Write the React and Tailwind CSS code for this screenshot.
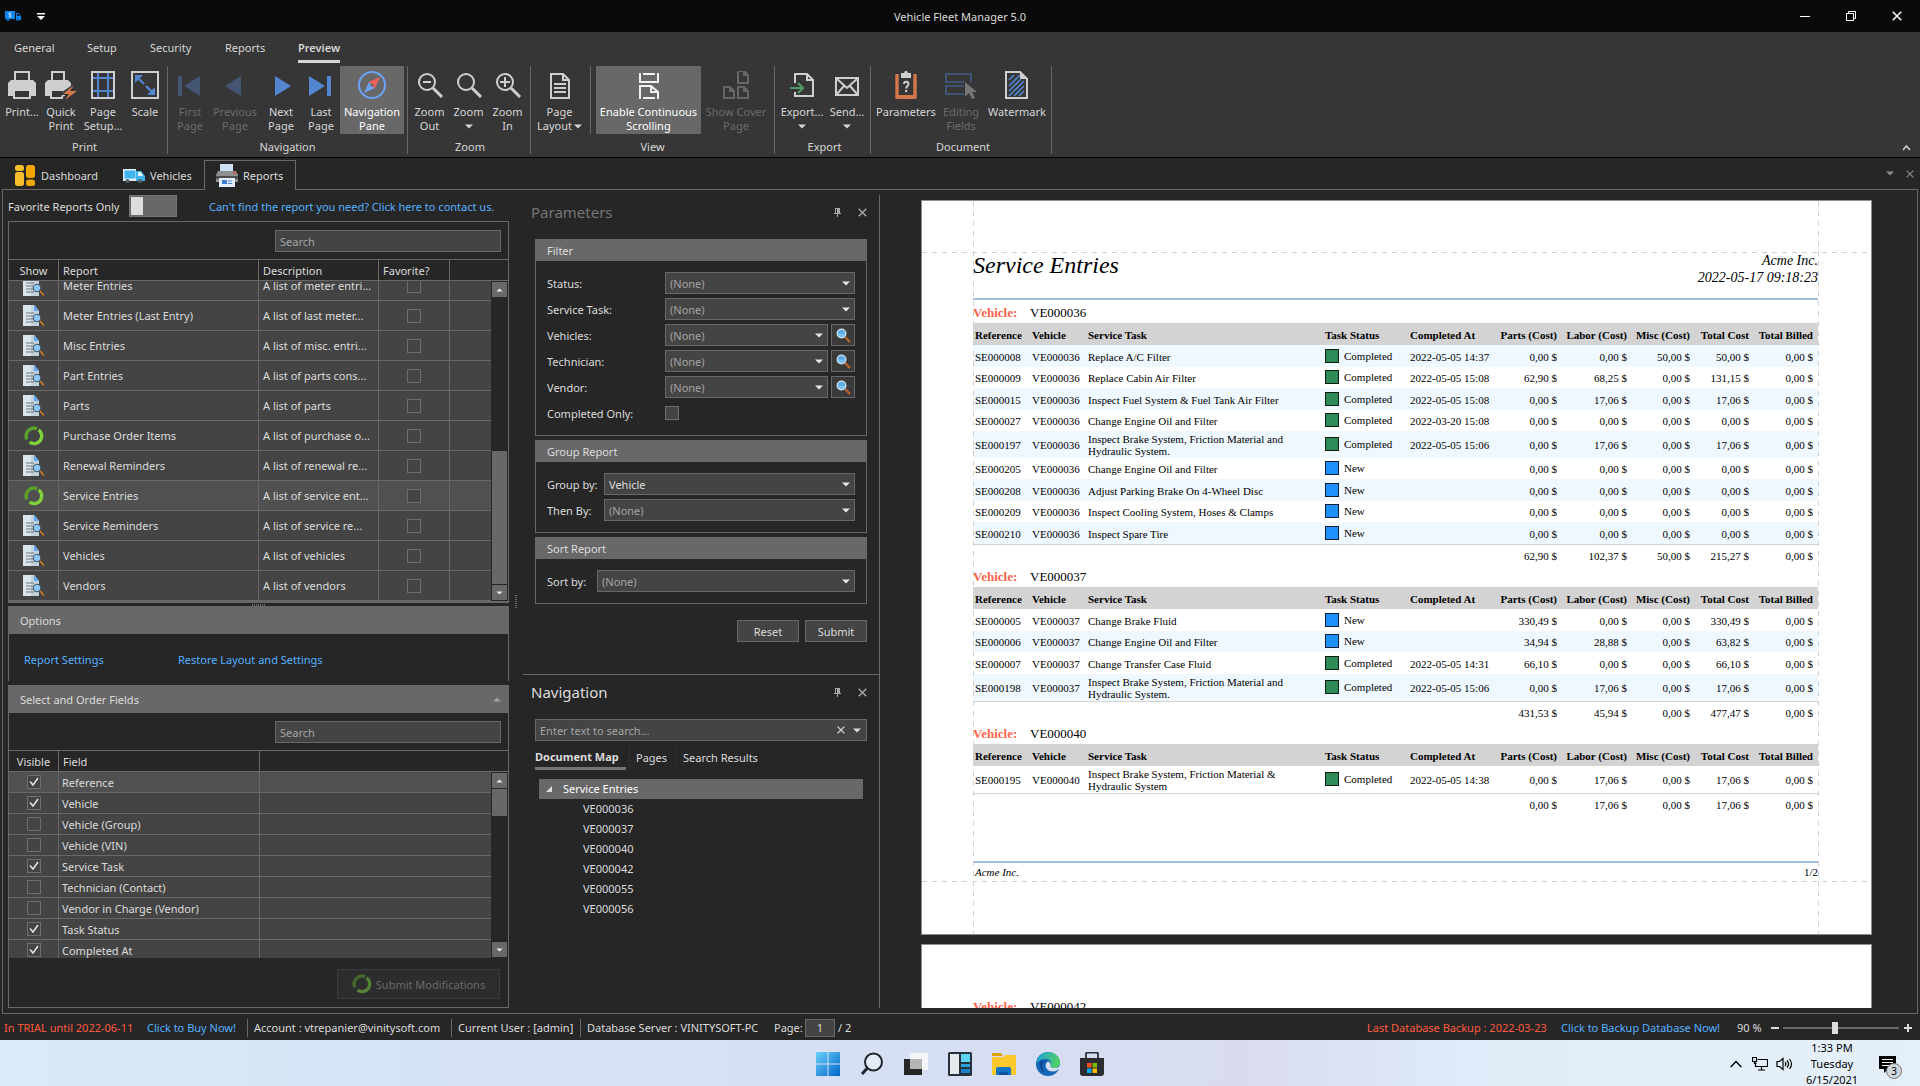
// src/App.jsx
import { useState } from "react";

const REPORTS = [
  { name: "Meter Entries", description: "A list of meter entri..." },
  { name: "Meter Entries (Last Entry)", description: "A list of last meter..." },
  { name: "Misc Entries", description: "A list of misc. entri..." },
  { name: "Part Entries", description: "A list of parts cons..." },
  { name: "Parts", description: "A list of parts" },
  { name: "Purchase Order Items", description: "A list of purchase o...", loading: true },
  { name: "Renewal Reminders", description: "A list of renewal re..." },
  { name: "Service Entries", description: "A list of service ent...", loading: true, selected: true },
  { name: "Service Reminders", description: "A list of service re..." },
  { name: "Vehicles", description: "A list of vehicles" },
  { name: "Vendors", description: "A list of vendors" },
];

const FIELDS = [
  ["Reference", true],
  ["Vehicle", true],
  ["Vehicle (Group)", false],
  ["Vehicle (VIN)", false],
  ["Service Task", true],
  ["Technician (Contact)", false],
  ["Vendor in Charge (Vendor)", false],
  ["Task Status", true],
  ["Completed At", true],
];

const MAP_ENTRIES = ["VE000036", "VE000037", "VE000040", "VE000042", "VE000055", "VE000056"];

// [reference, task, done, completed at, parts, labor, misc, total, billed]
const GROUPS = [
  {
    vehicle: "VE000036",
    shadeFirst: true,
    rows: [
      ["SE000008", "Replace A/C Filter", true, "2022-05-05 14:37", "0,00 $", "0,00 $", "50,00 $", "50,00 $", "0,00 $"],
      ["SE000009", "Replace Cabin Air Filter", true, "2022-05-05 15:08", "62,90 $", "68,25 $", "0,00 $", "131,15 $", "0,00 $"],
      ["SE000015", "Inspect Fuel System & Fuel Tank Air Filter", true, "2022-05-05 15:08", "0,00 $", "17,06 $", "0,00 $", "17,06 $", "0,00 $"],
      ["SE000027", "Change Engine Oil and Filter", true, "2022-03-20 15:08", "0,00 $", "0,00 $", "0,00 $", "0,00 $", "0,00 $"],
      ["SE000197", "Inspect Brake System, Friction Material and Hydraulic System.", true, "2022-05-05 15:06", "0,00 $", "17,06 $", "0,00 $", "17,06 $", "0,00 $"],
      ["SE000205", "Change Engine Oil and Filter", false, "", "0,00 $", "0,00 $", "0,00 $", "0,00 $", "0,00 $"],
      ["SE000208", "Adjust Parking Brake On 4-Wheel Disc", false, "", "0,00 $", "0,00 $", "0,00 $", "0,00 $", "0,00 $"],
      ["SE000209", "Inspect Cooling System, Hoses & Clamps", false, "", "0,00 $", "0,00 $", "0,00 $", "0,00 $", "0,00 $"],
      ["SE000210", "Inspect Spare Tire", false, "", "0,00 $", "0,00 $", "0,00 $", "0,00 $", "0,00 $"],
    ],
    totals: ["62,90 $", "102,37 $", "50,00 $", "215,27 $", "0,00 $"],
  },
  {
    vehicle: "VE000037",
    shadeFirst: false,
    rows: [
      ["SE000005", "Change Brake Fluid", false, "", "330,49 $", "0,00 $", "0,00 $", "330,49 $", "0,00 $"],
      ["SE000006", "Change Engine Oil and Filter", false, "", "34,94 $", "28,88 $", "0,00 $", "63,82 $", "0,00 $"],
      ["SE000007", "Change Transfer Case Fluid", true, "2022-05-05 14:31", "66,10 $", "0,00 $", "0,00 $", "66,10 $", "0,00 $"],
      ["SE000198", "Inspect Brake System, Friction Material and Hydraulic System.", true, "2022-05-05 15:06", "0,00 $", "17,06 $", "0,00 $", "17,06 $", "0,00 $"],
    ],
    totals: ["431,53 $", "45,94 $", "0,00 $", "477,47 $", "0,00 $"],
  },
  {
    vehicle: "VE000040",
    shadeFirst: false,
    rows: [
      ["SE000195", "Inspect Brake System, Friction Material & Hydraulic System", true, "2022-05-05 14:38", "0,00 $", "17,06 $", "0,00 $", "17,06 $", "0,00 $"],
    ],
    totals: ["0,00 $", "17,06 $", "0,00 $", "17,06 $", "0,00 $"],
  },
];

/* ---------- small icons ---------- */

function Caret({ className = "" }) {
  return (
    <svg className={className} width="8" height="5" viewBox="0 0 8 5" fill="currentColor" aria-hidden="true">
      <path d="M0 0.5h8L4 4.5z" />
    </svg>
  );
}

function Cross({ size = 9 }) {
  return (
    <svg width={size} height={size} viewBox="0 0 9 9" stroke="currentColor" strokeWidth="1.4" aria-hidden="true">
      <path d="M0.7 0.7l7.6 7.6M8.3 0.7L0.7 8.3" />
    </svg>
  );
}

function Pin() {
  return (
    <svg width="7" height="9" viewBox="0 0 7 9" fill="currentColor" aria-hidden="true">
      <path d="M1 0h5v5h1v1H4v3H3V6H0V5h1zM2 1v4h1V1z" fillRule="evenodd" />
    </svg>
  );
}

function ReportIcon() {
  return (
    <svg className="mx-auto block" width="21" height="21" viewBox="0 0 21 21" aria-hidden="true">
      <path d="M0 0h11l5 6v15H0z" fill="#d9e6ee" />
      <path d="M8 0h3l5 6v15H8z" fill="#c3d3de" />
      <path d="M11 0l5 6h-5z" fill="#5fa8ef" />
      <path d="M3 8h8M3 11h7M3 14h7M3 17h8" stroke="#777" strokeWidth="1.2" />
      <path d="M17 16l4 4.5" stroke="#d97b1c" strokeWidth="1.6" />
      <circle cx="14" cy="13" r="3.7" fill="#8cc8ff" stroke="#4b5560" strokeWidth="1.1" />
    </svg>
  );
}

function RingIcon({ className = "mx-auto block" }) {
  return (
    <svg className={className} width="20" height="20" viewBox="0 0 20 20" fill="none" strokeWidth="3.4" aria-hidden="true">
      <path d="M13 2.9A7.6 7.6 0 0 0 3.1 13.4" stroke="#5aa02c" />
      <path d="M14.6 3.8A7.6 7.6 0 0 1 5.6 16.2" stroke="#7fd23c" />
    </svg>
  );
}

function LensIcon() {
  return (
    <svg width="15" height="15" viewBox="0 0 15 15" aria-hidden="true">
      <path d="M9 9l5 5" stroke="#b5622c" strokeWidth="2.4" />
      <circle cx="5.5" cy="5.5" r="4.4" fill="#7cc0f0" stroke="#cfe3f0" strokeWidth="1.2" />
      <path d="M2 5.5a3.5 3.5 0 0 1 7 0" fill="#5aa7e4" />
    </svg>
  );
}

/* ---------- ribbon icons, 28 x 28 ---------- */

function RibbonSvg({ children }) {
  return (
    <svg className="block" width="28" height="28" viewBox="0 0 28 28" fill="none" aria-hidden="true">
      {children}
    </svg>
  );
}

const LIGHT = "#cfcfcf";
const BLUE = "#5485cf";

const icons = {
  print: (
    <RibbonSvg>
      <path d="M7 9V1h14v8" stroke={LIGHT} strokeWidth="2" />
      <path d="M3 9h22l3 3v13H0V12z" fill={LIGHT} />
      <path d="M6 19h16v8H6z" fill="#363636" stroke={LIGHT} strokeWidth="2" />
      <path d="M0 25h5v3H0zM23 25h5v3h-5z" fill="#363636" />
    </RibbonSvg>
  ),
  quick: (
    <svg className="block" width="32" height="28" viewBox="0 0 32 28" fill="none" aria-hidden="true">
      <path d="M7 9V1h12v8" stroke={LIGHT} strokeWidth="2" />
      <path d="M3 9h20l3 3v4l-6 9H0V12z" fill={LIGHT} />
      <path d="M6 19h13l-2 8H6z" fill="#363636" stroke={LIGHT} strokeWidth="2" />
      <path d="M29 14l-13 9h6l-4 7 14-10h-7z" fill="#363636" stroke="#363636" strokeWidth="2" />
      <path d="M29 14L18 23h6l-4 6 12-9h-7z" fill="#d2784a" />
    </svg>
  ),
  setup: (
    <RibbonSvg>
      <path d="M3 1h22v26H3z" stroke={LIGHT} strokeWidth="2" />
      <path d="M9 2v24M19 2v24M4 7h20M4 20h20" stroke={BLUE} strokeWidth="2" />
    </RibbonSvg>
  ),
  scale: (
    <RibbonSvg>
      <path d="M1 1h26v26H1z" stroke={LIGHT} strokeWidth="2" />
      <path d="M8 8l5 5M15 15l6 6" stroke={BLUE} strokeWidth="2.4" />
      <path d="M4 4h8l-8 8zM24 24h-8l8-8z" fill={BLUE} />
    </RibbonSvg>
  ),
  first: (
    <RibbonSvg>
      <path d="M2 5h4v20H2zM24 5v20L8 15z" fill="#445573" />
    </RibbonSvg>
  ),
  prev: (
    <RibbonSvg>
      <path d="M20 5v20L4 15z" fill="#445573" />
    </RibbonSvg>
  ),
  next: (
    <RibbonSvg>
      <path d="M8 5v20l16-10z" fill={BLUE} />
    </RibbonSvg>
  ),
  last: (
    <RibbonSvg>
      <path d="M2 5v20l16-10zM20 5h4v20h-4z" fill={BLUE} />
    </RibbonSvg>
  ),
  compass: (
    <RibbonSvg>
      <circle cx="14" cy="14" r="13" stroke="#6ea2f2" strokeWidth="2" />
      <path d="M6 22l5-11 6 6z" fill="#6ea2f2" />
      <path d="M22 6L11 11l3 3-1 1 2 1 2 1z" fill="#f56262" />
      <circle cx="14" cy="14" r="1.6" fill="#686868" />
    </RibbonSvg>
  ),
  zoomOut: (
    <RibbonSvg>
      <circle cx="11" cy="11" r="8" stroke={LIGHT} strokeWidth="2" />
      <path d="M17 17l9 9" stroke={LIGHT} strokeWidth="3" />
      <path d="M7 11h8" stroke={LIGHT} strokeWidth="2" />
    </RibbonSvg>
  ),
  zoom: (
    <RibbonSvg>
      <circle cx="11" cy="11" r="8" stroke={LIGHT} strokeWidth="2" />
      <path d="M17 17l9 9" stroke={LIGHT} strokeWidth="3" />
    </RibbonSvg>
  ),
  zoomIn: (
    <RibbonSvg>
      <circle cx="11" cy="11" r="8" stroke={LIGHT} strokeWidth="2" />
      <path d="M17 17l9 9" stroke={LIGHT} strokeWidth="3" />
      <path d="M6 11h10M11 6v10" stroke={LIGHT} strokeWidth="2" />
    </RibbonSvg>
  ),
  layout: (
    <RibbonSvg>
      <path d="M5 3h12l6 6v18H5z" stroke={LIGHT} strokeWidth="2" />
      <path d="M17 3v6h6" stroke={LIGHT} strokeWidth="2" />
      <path d="M8 13h12M8 17h12M8 21h12" stroke={LIGHT} strokeWidth="2" />
    </RibbonSvg>
  ),
  scrolling: (
    <RibbonSvg>
      <path d="M5 2v9h18V2M8 3h12" stroke="#f2f2f2" strokeWidth="2" />
      <path d="M5 28V15h11l7 6v7M16 15v6h7M8 27h12" stroke="#f2f2f2" strokeWidth="2" />
    </RibbonSvg>
  ),
  cover: (
    <RibbonSvg>
      <path d="M16 0h6l4 4v8H16zM22 0v4h4" stroke="#666" strokeWidth="2" />
      <path d="M2 16h6l4 4v7H2zM8 16v4h4M16 16h6l4 4v7H16zM22 16v4h4" stroke="#666" strokeWidth="2" />
    </RibbonSvg>
  ),
  exportDoc: (
    <RibbonSvg>
      <path d="M7 12V3h12l6 6v16H7v-4M19 3v6h6" stroke={LIGHT} strokeWidth="2" />
      <path d="M2 17h12M10 12l5 5-5 5" stroke="#4f9a68" strokeWidth="2.2" />
    </RibbonSvg>
  ),
  send: (
    <RibbonSvg>
      <path d="M3 7h22v17H3z" stroke={LIGHT} strokeWidth="2" />
      <path d="M3 7l11 10L25 7M3 24l8-9M25 24l-8-9" stroke={LIGHT} strokeWidth="2" />
    </RibbonSvg>
  ),
  params: (
    <RibbonSvg>
      <path d="M5 3v23h18V3" stroke="#d2784a" strokeWidth="3.4" />
      <path d="M5 26h18" stroke="#d2784a" strokeWidth="4" />
      <path d="M9 2h3l1-2h2l1 2h3v5H9z" fill={LIGHT} />
      <path d="M12 13c0-3 4.5-3 4.5 0 0 2-2.3 2-2.3 4.500" stroke={LIGHT} strokeWidth="1.9" />
      <circle cx="14.2" cy="20" r="1.2" fill={LIGHT} />
    </RibbonSvg>
  ),
  editing: (
    <svg className="block" width="32" height="28" viewBox="0 0 32 28" fill="none" aria-hidden="true">
      <path d="M26 11V3H1v8h18M19 15H1v8h18" stroke="#3f5377" strokeWidth="2" />
      <path d="M20 11v15l4-4 3 6 3-1-3-6h5z" fill="#777" />
    </svg>
  ),
  watermark: (
    <RibbonSvg>
      <path d="M3 1h14l7 7v19H3z" stroke={LIGHT} strokeWidth="2" />
      <path d="M17 0v8h8z" fill={LIGHT} />
      <path d="M6 9l5-5M6 15L17 4M6 20L18 8M6 25l15-15M11 25l10-10M16 25l5-5" stroke={BLUE} strokeWidth="1.6" />
    </RibbonSvg>
  ),
};

/* ---------- ribbon ---------- */

function RibbonButton({ icon, lines, width, disabled, active, caret, inlineCaret }) {
  const tone = disabled ? "text-[#6b6b6b]" : active ? "bg-[#686868] text-white" : "text-[#d6d6d6]";
  return (
    <button
      type="button"
      disabled={disabled}
      aria-pressed={active}
      className={`${width} ${tone} h-[68px] shrink-0 flex flex-col items-center pt-[5px] text-[11px] leading-[14px] whitespace-nowrap`}
    >
      {icons[icon]}
      <span className="mt-[6px] block">{lines[0]}</span>
      {lines[1] && (
        <span className="flex items-center justify-center gap-[2px]">
          {lines[1]}
          {inlineCaret && <Caret />}
        </span>
      )}
      {caret && <Caret className="mt-[5px]" />}
    </button>
  );
}

function RibbonGroup({ label, width, children }) {
  return (
    <div className={`${width} shrink-0 flex flex-col border-r border-[#686868]`}>
      <div className="flex items-start">{children}</div>
      <div className="mt-[5px] text-center text-[11px] leading-[15px] text-[#d6d6d6]">{label}</div>
    </div>
  );
}

function Ribbon() {
  return (
    <div className="bg-[#363636] border-b border-black">
      <nav className="flex h-[34px] pl-[14px] text-[11px] text-[#d6d6d6] [&>button]:h-[31px] [&>button]:text-left">
        <button type="button" className="w-[73px]">General</button>
        <button type="button" className="w-[63px]">Setup</button>
        <button type="button" className="w-[75px]">Security</button>
        <button type="button" className="w-[73px]">Reports</button>
        <button type="button" className="font-semibold shadow-[inset_0_-3px_#d6d6d6]">Preview</button>
      </nav>
      <div className="flex h-[91px] pb-[3px]">
        <RibbonGroup label="Print" width="w-[168px] pl-[2px]">
          <RibbonButton icon="print" lines={["Print..."]} width="w-[40px]" />
          <RibbonButton icon="quick" lines={["Quick", "Print"]} width="w-[38px]" />
          <RibbonButton icon="setup" lines={["Page", "Setup..."]} width="w-[46px]" />
          <RibbonButton icon="scale" lines={["Scale"]} width="w-[38px]" />
        </RibbonGroup>
        <RibbonGroup label="Navigation" width="w-[240px]">
          <RibbonButton icon="first" lines={["First", "Page"]} width="w-[44px]" disabled />
          <RibbonButton icon="prev" lines={["Previous", "Page"]} width="w-[46px]" disabled />
          <RibbonButton icon="next" lines={["Next", "Page"]} width="w-[46px]" />
          <div className="w-9 flex">
            <RibbonButton icon="last" lines={["Last", "Page"]} width="w-[34px]" />
          </div>
          <RibbonButton icon="compass" lines={["Navigation", "Pane"]} width="w-[64px]" active />
        </RibbonGroup>
        <RibbonGroup label="Zoom" width="w-[123px] pl-[2px]">
          <RibbonButton icon="zoomOut" lines={["Zoom", "Out"]} width="w-[39px]" />
          <RibbonButton icon="zoom" lines={["Zoom"]} width="w-[39px]" caret />
          <RibbonButton icon="zoomIn" lines={["Zoom", "In"]} width="w-[39px]" />
        </RibbonGroup>
        <RibbonGroup label="View" width="w-[244px]">
          <div className="w-[60px] shrink-0 flex pl-[3px] border-r border-[#686868] mr-[5px]">
            <RibbonButton icon="layout" lines={["Page", "Layout"]} width="w-[51px]" inlineCaret />
          </div>
          <RibbonButton icon="scrolling" lines={["Enable Continuous", "Scrolling"]} width="w-[105px]" active />
          <RibbonButton icon="cover" lines={["Show Cover", "Page"]} width="w-[70px]" disabled />
        </RibbonGroup>
        <RibbonGroup label="Export" width="w-[96px] pl-[4px]">
          <RibbonButton icon="exportDoc" lines={["Export..."]} width="w-[46px]" caret />
          <RibbonButton icon="send" lines={["Send..."]} width="w-[44px]" caret />
        </RibbonGroup>
        <RibbonGroup label="Document" width="w-[181px] pl-[4px]">
          <RibbonButton icon="params" lines={["Parameters"]} width="w-[62px]" />
          <RibbonButton icon="editing" lines={["Editing", "Fields"]} width="w-[48px]" disabled />
          <RibbonButton icon="watermark" lines={["Watermark"]} width="w-[64px]" />
        </RibbonGroup>
        <button type="button" aria-label="Collapse ribbon" className="ml-auto self-end mr-[9px] mb-[3px] text-[#d6d6d6]">
          <svg width="9" height="6" viewBox="0 0 9 6" fill="none" stroke="currentColor" strokeWidth="1.5">
            <path d="M1 5l3.500-4L8 5" />
          </svg>
        </button>
      </div>
    </div>
  );
}

function TitleBar() {
  return (
    <header className="grid grid-cols-3 items-center h-8 bg-[#0a0a0a] text-[#dcdcdc] text-[11px]">
      <div className="flex items-center gap-4 pl-[5px]">
        <svg width="16" height="10" viewBox="0 0 16 10" aria-hidden="true">
          <path d="M0 0h10v8H0z" fill="#0a86f0" />
          <path d="M11 2h3l2 3v4h-5z" fill="#0a86f0" />
          <path d="M12 3h2l1 2h-3z" fill="#0a0a0a" />
          <path d="M6.5 2H4v2h2v2H3.5" stroke="#bfe2ff" fill="none" />
          <circle cx="3" cy="8.5" r="1.5" fill="#0a6ac0" />
          <circle cx="12.5" cy="8.5" r="1.5" fill="#0a6ac0" />
        </svg>
        <svg width="8" height="7" viewBox="0 0 8 7" fill="#fff" aria-hidden="true">
          <path d="M0 0h8v1.500H0zM0 3h8L4 7z" />
        </svg>
      </div>
      <h1 className="text-center">Vehicle Fleet Manager 5.0</h1>
      <div className="flex justify-end items-center gap-9 pr-[18px]">
        <button type="button" aria-label="Minimize" className="w-[10px] h-[10px] flex items-center">
          <span className="h-px w-full bg-white" />
        </button>
        <button type="button" aria-label="Restore">
          <svg width="10" height="10" viewBox="0 0 10 10" fill="none" stroke="#fff">
            <path d="M0.5 2.500h7v7h-7zM2.500 2.500v-2h7v7h-2" />
          </svg>
        </button>
        <button type="button" aria-label="Close" className="text-white">
          <Cross size={10} />
        </button>
      </div>
    </header>
  );
}

/* ---------- document tabs ---------- */

function DocumentTabs() {
  return (
    <div className="flex items-end h-[31px] px-[2px] text-[11px] text-[#dcdcdc]">
      <button type="button" className="flex items-center gap-[5px] h-[28px] pl-[13px] w-[103px]">
        <svg width="21" height="21" viewBox="0 0 21 21" aria-hidden="true">
          <rect x="0" y="0" width="9" height="6" rx="2.5" fill="#f6bd2c" />
          <rect x="0" y="7" width="9" height="14" rx="2.5" fill="#f6bd2c" />
          <rect x="11" y="0" width="9" height="13" rx="2.5" fill="#f2a600" />
          <rect x="11" y="14.5" width="9" height="6.5" rx="2.5" fill="#f2a600" />
        </svg>
        Dashboard
      </button>
      <button type="button" className="flex items-center gap-[5px] h-[28px] pl-[18px] w-[99px]">
        <svg width="22" height="15" viewBox="0 0 22 15" aria-hidden="true">
          <path d="M0 1h13v12H0z" fill="#dfeef5" />
          <path d="M1.5 2.500h11v8h-11z" fill="#3fb4ee" />
          <path d="M13 3h5l4 5v5h-9z" fill="#3fb4ee" />
          <path d="M15 4h3l2 4h-5z" fill="#e8f6ff" />
          <circle cx="4.5" cy="13" r="2" fill="#56636b" />
          <circle cx="17" cy="13" r="2" fill="#56636b" />
        </svg>
        Vehicles
      </button>
      <button
        type="button"
        className="flex items-center gap-[5px] h-[30px] -mb-px pl-[11px] w-[92px] border border-b-0 border-[#686868] bg-[#262626] relative z-10"
      >
        <svg width="22" height="23" viewBox="0 0 22 23" aria-hidden="true">
          <path d="M4 0h13v9H4z" fill="#cfe0f4" />
          <path d="M2 7h18l2 4v7H0v-7z" fill="#8f8f8f" />
          <path d="M0 12h22v3H0z" fill="#4d4d4d" />
          <circle cx="18.5" cy="9" r="1.2" fill="#e04040" />
          <path d="M3 14h16v9H3z" fill="#e4eefb" />
          <path d="M6 16h5v4H6z" fill="#3c7dd9" />
          <path d="M12 17h4M12 19.500h4" stroke="#3c7dd9" />
        </svg>
        Reports
      </button>
      <div className="ml-auto self-center flex items-center gap-3 pr-1 text-[#8a8a8a]">
        <button type="button" aria-label="Open tabs"><Caret /></button>
        <button type="button" aria-label="Close tab"><Cross size={8} /></button>
      </div>
    </div>
  );
}

/* ---------- left column ---------- */

function GridCheckbox({ label, checked, onChange }) {
  return (
    <span className="relative mx-auto block w-[14px] h-[14px]">
      <input
        type="checkbox"
        aria-label={label}
        checked={checked}
        onChange={onChange}
        className="block appearance-none w-[14px] h-[14px] border border-[#6e6e6e] bg-[#444]"
      />
      {checked && (
        <svg className="absolute inset-0 pointer-events-none" width="14" height="14" viewBox="0 0 14 14" fill="none">
          <path d="M3 6.500l3 3.500 5-7" stroke="#e4e4e4" strokeWidth="1.5" />
        </svg>
      )}
    </span>
  );
}

function ScrollTrack({ children }) {
  return (
    <div className="w-[17px] shrink-0 flex flex-col px-px py-[1px] bg-[#262626]" aria-hidden="true">
      <div className="h-[15px] bg-[#686868] flex items-center justify-center text-[#e6e6e6]">
        <Caret className="rotate-180 w-[7px] h-[4px]" />
      </div>
      <div className="flex-1 flex flex-col py-px">{children}</div>
      <div className="h-[15px] bg-[#686868] flex items-center justify-center text-[#e6e6e6]">
        <Caret className="w-[7px] h-[4px]" />
      </div>
    </div>
  );
}

function SearchBox({ label }) {
  return (
    <input
      type="search"
      aria-label={label}
      placeholder="Search"
      className="w-[226px] h-[22px] px-1 border border-[#686868] bg-[#444] text-[11px] text-[#dcdcdc] placeholder:text-[#a5a5a5]"
    />
  );
}

function ReportCols() {
  return (
    <colgroup>
      <col className="w-[50px]" />
      <col className="w-[200px]" />
      <col className="w-[120px]" />
      <col className="w-[71px]" />
      <col />
    </colgroup>
  );
}

function ReportList() {
  const [favorites, setFavorites] = useState([]);
  const toggle = (name) =>
    setFavorites((f) => (f.includes(name) ? f.filter((n) => n !== name) : [...f, name]));

  return (
    <section className="flex flex-col h-[382px] shrink-0 mt-1 border border-b-2 border-[#686868]">
      <div className="flex justify-end pt-2 pr-[7px] h-[37px]">
        <SearchBox label="Search reports" />
      </div>
      <table className="w-full table-fixed border-separate border-spacing-0">
        <ReportCols />
        <thead>
          <tr className="text-left [&>th]:border-y [&>th]:border-r [&>th]:border-[#686868] [&>th]:font-normal [&>th]:h-[22px]">
            <th className="text-center">Show</th>
            <th className="pl-1">Report</th>
            <th className="pl-1">Description</th>
            <th className="pl-1">Favorite?</th>
            <th className="border-r-0!" aria-label="Empty column" />
          </tr>
        </thead>
      </table>
      {/* scrolled to the end, so the first row is cut at its top */}
      <div className="flex flex-1 min-h-0">
        <div className="flex-1 min-w-0 flex flex-col justify-end overflow-hidden">
          <table className="w-full table-fixed border-separate border-spacing-0 shrink-0">
            <ReportCols />
            <tbody>
              {REPORTS.map((r) => (
                <tr
                  key={r.name}
                  className={`${r.selected ? "bg-[#505050]" : "bg-[#444]"} [&>td]:h-[30px] [&>td]:border-b [&>td]:border-r [&>td]:border-[#686868]`}
                >
                  <td>{r.loading ? <RingIcon /> : <ReportIcon />}</td>
                  <td className="pl-1">{r.name}</td>
                  <td className="pl-1 whitespace-nowrap">{r.description}</td>
                  <td>
                    <GridCheckbox
                      label={`Favorite ${r.name}`}
                      checked={favorites.includes(r.name)}
                      onChange={() => toggle(r.name)}
                    />
                  </td>
                  <td className="border-r-0!" />
                </tr>
              ))}
            </tbody>
          </table>
        </div>
        <ScrollTrack>
          <div className="mt-auto h-[133px] bg-[#686868]" />
        </ScrollTrack>
      </div>
    </section>
  );
}

function FieldCols() {
  return (
    <colgroup>
      <col className="w-[50px]" />
      <col className="w-[201px]" />
      <col />
    </colgroup>
  );
}

function FieldList() {
  const [fields, setFields] = useState(FIELDS);
  const toggle = (name) => setFields((l) => l.map(([n, on]) => [n, n === name ? !on : on]));

  return (
    <section className="flex flex-col flex-1 min-h-0 mt-1 border border-t-0 border-[#686868]">
      <h2 className="flex items-center justify-between h-7 shrink-0 px-[11px] bg-[#686868]">
        Select and Order Fields
        <Caret className="rotate-180 text-[#a0a0a0] -mr-[4px]" />
      </h2>
      <div className="flex justify-end pt-2 pr-[7px] h-[37px] shrink-0">
        <SearchBox label="Search fields" />
      </div>
      <table className="w-full table-fixed border-separate border-spacing-0">
        <FieldCols />
        <thead>
          <tr className="text-left [&>th]:border-y [&>th]:border-r [&>th]:border-[#686868] [&>th]:font-normal [&>th]:h-[22px]">
            <th className="text-center">Visible</th>
            <th className="pl-1">Field</th>
            <th className="border-r-0!" aria-label="Empty column" />
          </tr>
        </thead>
      </table>
      <div className="flex flex-1 min-h-0">
        <div className="flex-1 overflow-hidden">
          <table className="w-full table-fixed border-separate border-spacing-0">
            <FieldCols />
            <tbody>
              {fields.map(([name, on], i) => (
                <tr
                  key={name}
                  className={`${i === 0 ? "bg-[#505050]" : "bg-[#444]"} [&>td]:h-[21px] [&>td]:border-b [&>td]:border-r [&>td]:border-[#686868]`}
                >
                  <td><GridCheckbox label={`Show ${name}`} checked={on} onChange={() => toggle(name)} /></td>
                  <td className="pl-[3px] pt-px leading-[16px]">{name}</td>
                  <td className="border-r-0!" />
                </tr>
              ))}
            </tbody>
          </table>
        </div>
        <ScrollTrack>
          <div className="h-[27px] bg-[#686868]" />
        </ScrollTrack>
      </div>
      <div className="flex justify-end shrink-0 pt-[11px] pb-2 pr-2">
        <button type="button" disabled className="flex items-center justify-center gap-1 w-[163px] h-[30px] border border-[#3c3c3c] bg-[#2d2d2d] text-[#6b6b6b]">
          <RingIcon className="opacity-50" />
          Submit Modifications
        </button>
      </div>
    </section>
  );
}

function ReportsColumn() {
  return (
    <div className="w-[501px] shrink-0 flex flex-col py-[5px]">
      <div className="flex items-center h-[22px] shrink-0">
        <label htmlFor="favorites-only" className="w-[121px]">Favorite Reports Only</label>
        <span className="relative block w-[48px] h-[22px]">
          <input
            id="favorites-only"
            type="checkbox"
            role="switch"
            className="peer block appearance-none w-[48px] h-[22px] border border-[#757575] bg-[#686868]"
          />
          <span className="absolute left-[2px] top-[2px] w-3 h-[18px] bg-[#dcdcdc] pointer-events-none peer-checked:left-[34px]" />
        </span>
        <a href="#contact" className="ml-auto w-[300px] text-[#55b1ff] whitespace-nowrap">
          Can't find the report you need? Click here to contact us.
        </a>
      </div>
      <ReportList />
      <div className="h-[3px] shrink-0 flex justify-center items-center">
        <span className="w-[13px] h-[2px] bg-[repeating-linear-gradient(90deg,#686868_0_1px,transparent_1px_2px)]" />
      </div>
      <section className="shrink-0 border-x border-[#686868]">
        <h2 className="flex items-center h-7 px-[11px] bg-[#686868]">Options</h2>
        <div className="flex items-center h-[47px] px-[15px] pt-[3px]">
          <a href="#settings" className="w-[154px] text-[#55b1ff]">Report Settings</a>
          <a href="#restore" className="text-[#55b1ff]">Restore Layout and Settings</a>
        </div>
      </section>
      <FieldList />
    </div>
  );
}

/* ---------- parameters and navigation ---------- */

function PaneTitle({ title, tone }) {
  return (
    <div className="flex items-center justify-between h-[34px] mb-[10px] shrink-0 pl-2 pr-3 text-[#a8a8a8]">
      <h2 className={`text-[15px] leading-5 ${tone}`}>{title}</h2>
      <div className="flex items-center gap-[17px]">
        <button type="button" aria-label={`Pin ${title}`}><Pin /></button>
        <button type="button" aria-label={`Close ${title}`}><Cross /></button>
      </div>
    </div>
  );
}

function Picker({ id, label, labelWidth, value = "(None)", lookup }) {
  return (
    <div className="flex items-center h-[22px]">
      <label htmlFor={id} className={`${labelWidth} shrink-0`}>{label}</label>
      <span className="relative flex-1">
        <select
          id={id}
          defaultValue={value}
          className={`block appearance-none w-full h-[22px] px-1 border border-[#686868] bg-[#444] ${value === "(None)" ? "text-[#a5a5a5]" : "text-[#dcdcdc]"}`}
        >
          <option>{value}</option>
        </select>
        <Caret className="absolute right-[5px] top-[9px] pointer-events-none text-[#e6e6e6]" />
      </span>
      {lookup && (
        <button
          type="button"
          aria-label={`Find ${label}`}
          className="ml-[3px] w-6 h-[22px] border border-[#686868] bg-[#3a3a3a] flex items-center justify-center"
        >
          <LensIcon />
        </button>
      )}
    </div>
  );
}

function ParamGroup({ title, children }) {
  return (
    <section aria-label={title} className="border border-t-0 border-[#686868]">
      <h3 className="flex items-center h-[22px] px-[11px] bg-[#686868]">{title}</h3>
      <div className="flex flex-col gap-1 px-[11px] py-[11px]">{children}</div>
    </section>
  );
}

function SidePanes() {
  return (
    <aside className="w-[357px] shrink-0 my-[5px] flex flex-col border-r border-[#686868]">
      <PaneTitle title="Parameters" tone="text-[#757575]" />
      <form className="flex flex-col gap-1 px-3" onSubmit={(e) => e.preventDefault()}>
        <ParamGroup title="Filter">
          <Picker id="status" label="Status:" labelWidth="w-[118px]" />
          <Picker id="task" label="Service Task:" labelWidth="w-[118px]" />
          <Picker id="vehicles" label="Vehicles:" labelWidth="w-[118px]" lookup />
          <Picker id="technician" label="Technician:" labelWidth="w-[118px]" lookup />
          <Picker id="vendor" label="Vendor:" labelWidth="w-[118px]" lookup />
          <div className="flex items-center h-[22px]">
            <label htmlFor="completed-only" className="w-[118px]">Completed Only:</label>
            <input id="completed-only" type="checkbox" className="appearance-none w-[14px] h-[14px] border border-[#6e6e6e] bg-[#444] checked:bg-[#9a9a9a]" />
          </div>
        </ParamGroup>
        <ParamGroup title="Group Report">
          <Picker id="group-by" label="Group by:" labelWidth="w-[57px]" value="Vehicle" />
          <Picker id="then-by" label="Then By:" labelWidth="w-[57px]" />
        </ParamGroup>
        <ParamGroup title="Sort Report">
          <Picker id="sort-by" label="Sort by:" labelWidth="w-[50px]" />
        </ParamGroup>
        <div className="flex justify-end gap-[6px] mt-3">
          <button type="reset" className="w-[62px] h-[22px] border border-[#686868] bg-[#444]">Reset</button>
          <button type="submit" className="w-[62px] h-[22px] border border-[#686868] bg-[#444]">Submit</button>
        </div>
      </form>

      <div className="mt-8 border-t border-[#686868]">
        <PaneTitle title="Navigation" tone="text-[#dcdcdc]" />
        <div className="px-3">
          <div className="flex items-center gap-2 h-[22px] pr-[5px] border border-[#686868] bg-[#444]">
            <input
              type="text"
              aria-label="Search in document"
              placeholder="Enter text to search..."
              className="flex-1 h-[20px] px-1 text-[11px] placeholder:text-[#a5a5a5]"
            />
            <button type="button" aria-label="Clear search"><Cross size={8} /></button>
            <button type="button" aria-label="Search options"><Caret /></button>
          </div>
          <div className="flex mt-1 h-[25px] leading-[24px]">
            <button type="button" className="w-[91px] text-left font-bold border-b-[3px] border-[#757575] whitespace-nowrap">
              Document Map
            </button>
            <button type="button" className="w-[48px] ml-[3px] pl-[6px] text-left border-x border-[#303030]">Pages</button>
            <button type="button" className="ml-[6px] whitespace-nowrap">Search Results</button>
          </div>
          <ul className="mt-[9px] px-1 leading-5">
            <li>
              <button type="button" className="flex items-center gap-[11px] w-full h-5 pl-[7px] bg-[#686868] text-white">
                <svg width="6" height="6" viewBox="0 0 6 6" fill="#dcdcdc" aria-hidden="true">
                  <path d="M6 0v6H0z" />
                </svg>
                Service Entries
              </button>
              <ul>
                {MAP_ENTRIES.map((v) => (
                  <li key={v}>
                    <button type="button" className="block w-full h-5 pl-[44px] text-left">{v}</button>
                  </li>
                ))}
              </ul>
            </li>
          </ul>
        </div>
      </div>
    </aside>
  );
}

/* ---------- printed report ---------- */

function Status({ done }) {
  return (
    <span className="flex items-center gap-[5px] leading-[14px] pb-[2px]">
      <span className={`${done ? "bg-[#2e8b57]" : "bg-[#1e90ff]"} w-[14px] h-[14px] border border-black/80`} />
      {done ? "Completed" : "New"}
    </span>
  );
}

function VehicleHeading({ vehicle }) {
  return (
    <h3 className="flex h-[21px] items-center text-[13px]">
      <span className="w-[57px] font-bold text-[#ff6347]">Vehicle:</span>
      <span>{vehicle}</span>
    </h3>
  );
}

function VehicleGroup({ group }) {
  return (
    <section>
      <VehicleHeading vehicle={group.vehicle} />
      <table className="w-full table-fixed border-separate border-spacing-0 text-[11px] leading-[12px]">
        <colgroup>
          <col className="w-[57px]" />
          <col className="w-[56px]" />
          <col />
          <col className="w-[84px]" />
          <col className="w-[89px]" />
          <col className="w-[66px]" />
          <col className="w-[70px]" />
          <col className="w-[63px]" />
          <col className="w-[59px]" />
          <col className="w-[64px]" />
        </colgroup>
        <thead>
          <tr className="bg-[#d3d3d3] text-left whitespace-nowrap [&>th]:h-[22px] [&>th]:px-[2px] [&>th]:pt-px">
            <th>Reference</th>
            <th>Vehicle</th>
            <th>Service Task</th>
            <th>Task Status</th>
            <th className="pl-[3px]!">Completed At</th>
            {["Parts (Cost)", "Labor (Cost)", "Misc (Cost)", "Total Cost", "Total Billed"].map((h) => (
              <th key={h} className="text-right pr-[5px]!">{h}</th>
            ))}
          </tr>
        </thead>
        <tbody>
          {group.rows.map(([ref, task, done, completedAt, ...costs], i) => {
            const shaded = (i % 2 === 0) === group.shadeFirst;
            const tall = task.length > 50;
            const height = tall ? "[&>td]:h-[27px]" : i % 2 === 0 ? "[&>td]:h-[22px]" : "[&>td]:h-[21px]";
            return (
              <tr key={ref} className={`${shaded ? "bg-[#f0f8ff]" : ""} ${height} [&>td]:px-[2px] [&>td]:pt-px [&>td]:pb-0`}>
                <td>{ref}</td>
                <td>{group.vehicle}</td>
                <td className="pr-8!">{task}</td>
                <td><Status done={done} /></td>
                <td className="pl-[3px]! whitespace-nowrap">{completedAt}</td>
                {costs.map((c, n) => (
                  <td key={n} className="text-right pr-[5px]!">{c}</td>
                ))}
              </tr>
            );
          })}
        </tbody>
        <tfoot>
          <tr className="[&>td]:h-[22px] [&>td]:border-t [&>td]:border-[#d3d3d3]">
            <td colSpan={5} />
            {group.totals.map((c, n) => (
              <td key={n} className="text-right pr-[5px]">{c}</td>
            ))}
          </tr>
        </tfoot>
      </table>
    </section>
  );
}

function MarginGuides() {
  return (
    <div aria-hidden="true" className="absolute inset-0 pointer-events-none">
      <div className="absolute inset-y-0 left-[51px] w-px bg-[repeating-linear-gradient(180deg,#d0d0d0_0_5px,transparent_5px_10px)]" />
      <div className="absolute inset-y-0 right-[52px] w-px bg-[repeating-linear-gradient(180deg,#d0d0d0_0_5px,transparent_5px_10px)]" />
      <div className="absolute inset-x-0 top-[51px] h-px bg-[repeating-linear-gradient(90deg,#d0d0d0_0_5px,transparent_5px_10px)]" />
      <div className="absolute inset-x-0 bottom-[52px] h-px bg-[repeating-linear-gradient(90deg,#d0d0d0_0_5px,transparent_5px_10px)]" />
    </div>
  );
}

function Preview() {
  return (
    <main className="flex-1 min-w-0 flex flex-col items-center gap-[9px] pt-[10px] pr-1 mb-[5px] overflow-hidden font-['Liberation_Serif',serif] text-black">
      <article className="relative w-[951px] h-[735px] shrink-0 flex flex-col pl-[51px] pr-[53px] pt-[51px] pb-[52px] bg-white border border-[#8c8c8c]">
        <header className="flex justify-between h-[48px] border-b-2 border-[#a0bedc] italic">
          <h2 className="text-[24px] leading-[26px]">Service Entries</h2>
          <div className="text-[14px] leading-[17px] text-right">
            <p>Acme Inc.</p>
            <p>2022-05-17 09:18:23</p>
          </div>
        </header>
        <div className="pt-[2px]">
          {GROUPS.map((g) => (
            <VehicleGroup key={g.vehicle} group={g} />
          ))}
        </div>
        <footer className="mt-auto flex justify-between items-center h-[21px] border-t-2 border-[#a0bedc] text-[11px]">
          <span className="italic pl-[2px]">Acme Inc.</span>
          <span>1/2</span>
        </footer>
        <MarginGuides />
      </article>
      <article className="w-[951px] h-[735px] shrink-0 pl-[51px] pr-[53px] pt-[51px] bg-white border border-[#8c8c8c]">
        <VehicleHeading vehicle="VE000042" />
      </article>
    </main>
  );
}

/* ---------- bottom bars ---------- */

function StatusBar() {
  const [page, setPage] = useState("1");
  return (
    <footer className="flex items-center h-[26px] shrink-0 pt-px pl-1 pr-2 text-[11px] leading-[18px] whitespace-nowrap">
      <span className="w-[143px] text-[#ff5a40]">In TRIAL until 2022-06-11</span>
      <a href="#buy" className="w-[100px] text-[#55b1ff]">Click to Buy Now!</a>
      <span className="w-[204px] pl-[6px] border-l border-[#686868]">Account : vtrepanier@vinitysoft.com</span>
      <span className="w-[129px] pl-[6px] border-l border-[#686868]">Current User : [admin]</span>
      <span className="w-[194px] pl-[6px] border-l border-[#686868]">Database Server : VINITYSOFT-PC</span>
      <label htmlFor="page-number" className="w-[31px]">Page:</label>
      <input
        id="page-number"
        type="text"
        value={page}
        onChange={(e) => setPage(e.target.value)}
        className="w-[30px] h-[18px] text-center border border-[#686868] bg-[#444]"
      />
      <span className="ml-[3px]">/ 2</span>

      <span className="ml-auto w-[194px] text-[#ff5a40]">Last Database Backup : 2022-03-23</span>
      <a href="#backup" className="w-[176px] text-[#55b1ff]">Click to Backup Database Now!</a>
      <span className="w-[34px]">90 %</span>
      <button type="button" aria-label="Zoom out" className="w-2 h-2 flex items-center">
        <span className="w-full h-[2px] bg-[#dcdcdc]" />
      </button>
      <input
        type="range"
        aria-label="Zoom"
        min="10"
        max="190"
        defaultValue="90"
        className="appearance-none ml-1 mr-[5px] w-[116px] h-3 bg-[linear-gradient(#686868,#686868)] bg-[length:100%_2px] bg-center bg-no-repeat [&::-webkit-slider-thumb]:appearance-none [&::-webkit-slider-thumb]:w-[6px] [&::-webkit-slider-thumb]:h-3 [&::-webkit-slider-thumb]:bg-[#dcdcdc]"
      />
      <button type="button" aria-label="Zoom in">
        <svg width="8" height="8" viewBox="0 0 8 8" stroke="#dcdcdc" strokeWidth="2">
          <path d="M0 4h8M4 0v8" />
        </svg>
      </button>
    </footer>
  );
}

function TaskbarApps() {
  return (
    <div className="flex items-center gap-5">
      <button type="button" aria-label="Start">
        <svg width="24" height="24" viewBox="0 0 24 24">
          <defs>
            <linearGradient id="win" x1="0" y1="0" x2="1" y2="1">
              <stop offset="0" stopColor="#6cd0fb" />
              <stop offset="1" stopColor="#0067c8" />
            </linearGradient>
          </defs>
          <path d="M0 0h11.500v11.500H0zM12.500 0H24v11.500H12.500zM0 12.500h11.500V24H0zM12.500 12.500H24V24H12.500z" fill="url(#win)" />
        </svg>
      </button>
      <button type="button" aria-label="Search">
        <svg width="24" height="24" viewBox="0 0 24 24" fill="none" stroke="#20262c">
          <circle cx="13.5" cy="10" r="8.5" strokeWidth="2" fill="#e6ecf6" />
          <path d="M7.5 16L2 22" strokeWidth="3" />
        </svg>
      </button>
      <button type="button" aria-label="Task view">
        <svg width="24" height="24" viewBox="0 0 24 24">
          <path d="M6 1h18v17H6z" fill="#f4f6fa" />
          <path d="M0 7h18v16H0z" fill="#262626" />
          <path d="M6 7h12v10H6z" fill="#b5b5b5" />
        </svg>
      </button>
      <button type="button" aria-label="Widgets">
        <svg width="24" height="24" viewBox="0 0 24 24">
          <rect width="24" height="24" rx="1.5" fill="#26323e" />
          <path d="M2 2h9v20H2z" fill="#e6e8ec" />
          <path d="M13 2h9v8h-9z" fill="#5cd5f5" />
          <path d="M13 12h9v3h-9z" fill="#2ba3dc" />
          <path d="M13 17h9v4h-9z" fill="#1c7fc8" />
        </svg>
      </button>
      <button type="button" aria-label="File Explorer">
        <svg width="24" height="24" viewBox="0 0 24 24">
          <path d="M0 2q0-1 1-1h8l2 3H0z" fill="#e0a010" />
          <path d="M0 5h11l2-2h11v20H0z" fill="#fcc92c" />
          <path d="M4 17q0-2 2-2h11q2 0 2 2v6H4z" fill="#1272c4" />
          <path d="M7 20h9v3H7z" fill="#0a55a0" />
        </svg>
      </button>
      <button type="button" aria-label="Edge">
        <svg width="24" height="24" viewBox="0 0 24 24">
          <defs>
            <linearGradient id="edge-top" x1="0" y1="0" x2="1" y2="0.3">
              <stop offset="0" stopColor="#1f9be0" />
              <stop offset="1" stopColor="#4fd16a" />
            </linearGradient>
          </defs>
          <circle cx="12" cy="12" r="12" fill="#1565b8" />
          <path d="M0.5 10C2 3 7 0 12 0c7 0 12 5 12 10.500 0 3.500-3 5.500-6 5.500-2.500 0-4-1-3.500-2.500C16 10 14 7 10 7 5 7 1.500 9 0.500 12z" fill="url(#edge-top)" />
          <path d="M12 9.500c-2 1-3 3-2 6 1 2.500 4 4.500 8 4 2-.3 4-1.500 5-3l1 1V12c0 3-3 4.500-6 4-2.500-.3-4-1-3.500-2.500.5-2-.5-3.500-2.500-4z" fill="#d5dff2" />
          <path d="M9.500 9C6 11 5 16 9 20.500 4 18 2 12 5 8.500z" fill="#0d4a94" />
        </svg>
      </button>
      <button type="button" aria-label="Store">
        <svg width="24" height="24" viewBox="0 0 24 24">
          <path d="M6 7V2q0-1.500 1.500-1.500h9Q18 0.500 18 2v5" fill="none" stroke="#26303a" strokeWidth="1.8" />
          <path d="M0 6h24v15q0 3-3 3H3q-3 0-3-3z" fill="#2a2c30" />
          <path d="M7 11h4.500v4.500H7z" fill="#f05022" />
          <path d="M12.500 11H17v4.500h-4.500z" fill="#7fba00" />
          <path d="M7 16.500h4.500V21H7z" fill="#00a4ef" />
          <path d="M12.500 16.500H17V21h-4.500z" fill="#ffb900" />
        </svg>
      </button>
    </div>
  );
}

function Taskbar() {
  return (
    <footer className="grid grid-cols-[1fr_auto_1fr] items-center h-[46px] shrink-0 bg-[linear-gradient(90deg,#d9ebf7_0%,#d5e3f5_25%,#d6def3_50%,#d9dcef_65%,#e0edf9_78%,#e4eff9_100%)] text-black text-[11px]">
      <span />
      <TaskbarApps />
      <div className="flex items-center justify-end pr-6">
        <button type="button" aria-label="Hidden icons">
          <svg width="12" height="8" viewBox="0 0 12 8" fill="none" stroke="#000" strokeWidth="1.4">
            <path d="M0.7 7L6 1.500 11.300 7" />
          </svg>
        </button>
        <svg className="ml-[10px]" width="16" height="14" viewBox="0 0 16 14" fill="none" stroke="#000" aria-hidden="true">
          <path d="M5.500 2.500h10v7h-12v-4M9.500 9.500v4M6 13h7M0.500 0.500h4v4h-4zM2.500 4.500v2h2" strokeWidth="1.2" />
        </svg>
        <svg className="ml-2" width="17" height="14" viewBox="0 0 17 14" fill="none" stroke="#000" strokeWidth="1.2" aria-hidden="true">
          <path d="M1 4.500h2.500L7 1.500v11L3.500 9.500H1zM9 5q1.500 2 0 4M11 3.500q3 3.500 0 7M13.500 2q4 5 0 10" />
        </svg>
        <div className="w-[78px] text-center leading-4">
          <p>1:33 PM</p>
          <p>Tuesday</p>
          <p>6/15/2021</p>
        </div>
        <button type="button" aria-label="Notifications" className="relative ml-2">
          <svg width="17" height="17" viewBox="0 0 17 17">
            <path d="M0 0h17v13H9l-4 4v-4H0z" fill="#000" />
            <path d="M3 3.500h11M3 6.500h11M3 9.500h7" stroke="#fff" strokeWidth="1.2" />
          </svg>
          <span className="absolute left-[7px] top-[7px] w-4 h-4 rounded-full border border-[#777] bg-[#cfd6de] text-[10px] leading-[14px]">3</span>
        </button>
      </div>
    </footer>
  );
}

export default function App() {
  return (
    <div className="h-screen min-h-[1086px] flex flex-col bg-[#262626] text-[#dcdcdc] text-[11px] leading-[15px] font-['Noto_Sans',sans-serif]">
      <TitleBar />
      <Ribbon />
      <DocumentTabs />
      <div className="flex flex-1 min-h-0 mx-[2px] pl-[5px] border border-[#686868]">
        <ReportsColumn />
        <div className="w-[14px] shrink-0 flex items-center justify-center">
          <span className="w-[2px] h-[13px] bg-[repeating-linear-gradient(180deg,#686868_0_1px,transparent_1px_2px)]" />
        </div>
        <SidePanes />
        <Preview />
      </div>
      <StatusBar />
      <Taskbar />
    </div>
  );
}
